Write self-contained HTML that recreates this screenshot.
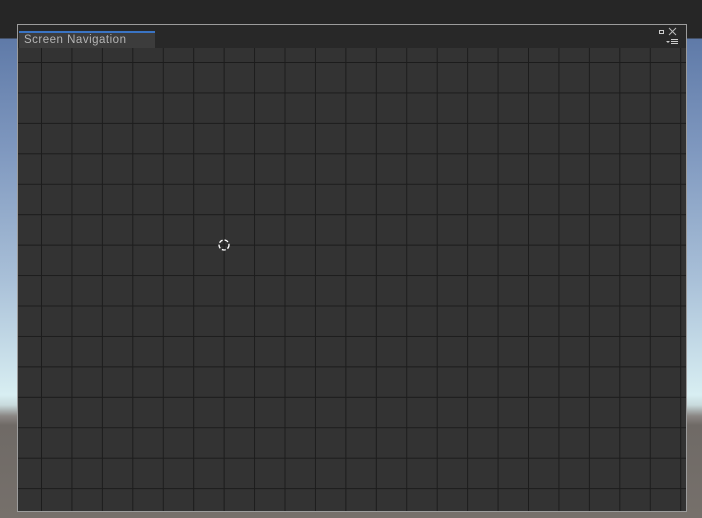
<!DOCTYPE html>
<html><head><style>
body{margin:0;width:702px;height:518px;overflow:hidden;position:relative;font-family:"Liberation Sans",sans-serif;
background:linear-gradient(to bottom,#262626 0,#262626 38px,#5f7aa8 39px,#7f98bf 150px,#a9c0d8 280px,#d8eef2 395px,#c8dadc 405px,#8a8684 416px,#6f6a66 425px,#76706b 518px);}
.win{position:absolute;left:17px;top:24px;width:668px;height:486px;border:1px solid #9c9c9c;background:#282828;}
.tab{position:absolute;left:1px;top:6px;width:136px;height:17px;background:#3c3c3c;border-top:2px solid #3a74c4;box-sizing:border-box;color:#b4b4b4;font-size:11.5px;line-height:15px;padding-left:5px;letter-spacing:.5px}
.grid{position:absolute;left:0;top:23px;width:668px;height:463px;background-color:#333;
background-image:linear-gradient(to right,#1c1c1c 1px,transparent 1px),linear-gradient(to bottom,#1c1c1c 1px,transparent 1px);
background-size:30.45px 30.45px;background-position:23px 14px;}
</style></head><body>
<div class="win">
<div class="tab">Screen Navigation</div>
<svg style="position:absolute;left:640px;top:2px" width="28" height="20">
<rect x="1.5" y="3.5" width="4" height="3" fill="none" stroke="#ccc"/>
<path d="M11 1L18 8M18 1L11 8" stroke="#bbb" stroke-width="1"/>
<path d="M8 14h4l-2 2z" fill="#ccc"/>
<path d="M13 12.5h7M13 14.5h7M13 16.5h7" stroke="#ccc"/>
</svg>
<div class="grid">
<svg style="position:absolute;left:199px;top:190px" width="14" height="14">
<circle cx="7" cy="7" r="5" fill="none" stroke="#fff" stroke-width="1.3" stroke-dasharray="4 2"/>
</svg>
</div>
</div>
</body></html>
